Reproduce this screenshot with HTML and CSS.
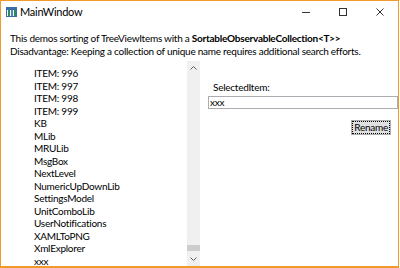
FILE: index.html
```html
<!DOCTYPE html>
<html lang="en">
<head>
    <meta charset="UTF-8">
    <title>MainWindow</title>
    <link rel="stylesheet" href="styles.css">
</head>
<body>
    <div class="window">
        <div class="titlebar">
            <svg class="app-icon" width="11" height="10" viewBox="0 0 11 10">
                <rect x="0.5" y="0.5" width="10" height="9" fill="#fff" stroke="#3a6ea5"/>
                <rect x="1" y="1" width="9" height="2" fill="#3a6ea5"/>
                <rect x="2" y="3" width="2" height="6" fill="#2e8b57"/>
                <rect x="5" y="3" width="2" height="6" fill="#4a86c5"/>
                <rect x="8" y="3" width="2" height="6" fill="#2e8b57"/>
            </svg>
            <span class="title">MainWindow</span>
            <div class="caption-buttons">
                <span class="cap">
                    <svg width="8" height="8" viewBox="0 0 8 8"><path d="M0 4.5h8" stroke="#333"/></svg>
                </span>
                <span class="cap">
                    <svg width="8" height="8" viewBox="0 0 8 8"><rect x="0.5" y="0.5" width="7" height="7" fill="none" stroke="#333"/></svg>
                </span>
                <span class="cap">
                    <svg width="8" height="8" viewBox="0 0 8 8"><path d="M0.5 0.5l7 7M7.5 0.5l-7 7" stroke="#333"/></svg>
                </span>
            </div>
        </div>
        <div class="content">
            <p class="intro">This demos sorting of TreeViewItems with a <b>SortableObservableCollection&lt;T&gt;&gt;</b><br>Disadvantage: Keeping a collection of unique name requires additional search efforts.</p>
            <div class="main">
                <div class="tree">
                    <ul class="items">
                        <li>ITEM: 996</li>
                        <li>ITEM: 997</li>
                        <li>ITEM: 998</li>
                        <li>ITEM: 999</li>
                        <li>KB</li>
                        <li>MLib</li>
                        <li>MRULib</li>
                        <li>MsgBox</li>
                        <li>NextLevel</li>
                        <li>NumericUpDownLib</li>
                        <li>SettingsModel</li>
                        <li>UnitComboLib</li>
                        <li>UserNotifications</li>
                        <li>XAMLToPNG</li>
                        <li>XmlExplorer</li>
                        <li class="selected">xxx</li>
                    </ul>
                    <div class="scrollbar">
                        <span class="arrow up">
                            <svg width="7" height="4" viewBox="0 0 7 4"><path d="M0.5 3.5l3-3 3 3" fill="none" stroke="#606060"/></svg>
                        </span>
                        <span class="track"><span class="thumb"></span></span>
                        <span class="arrow down">
                            <svg width="7" height="4" viewBox="0 0 7 4"><path d="M0.5 0.5l3 3 3-3" fill="none" stroke="#606060"/></svg>
                        </span>
                    </div>
                </div>
                <div class="side">
                    <label class="side-label">SelectedItem:</label>
                    <div class="textbox">xxx</div>
                    <div class="actions">
                        <button class="rename">Rename</button>
                    </div>
                </div>
            </div>
        </div>
    </div>
</body>
</html>
```

FILE: styles.css
```css
:root {
    --border-color: #f09a2c;
    --text-color: #000;
    --scroll-bg: #f0f0f0;
    --thumb-color: #cdcdcd;
}

* {
    box-sizing: border-box;
}

body {
    margin: 0;
    font-family: Lato, "Noto Sans", sans-serif;
    font-size: 10px;
    letter-spacing: -0.25px;
    color: var(--text-color);
    background: #fff;
}

.window {
    width: 399px;
    height: 268px;
    border: 1px solid var(--border-color);
    border-bottom-width: 2px;
    display: flex;
    flex-direction: column;
    overflow: hidden;
}

.titlebar {
    height: 21px;
    display: flex;
    align-items: center;
    padding-left: 5px;
}

.app-icon {
    margin-right: 3px;
}

.title {
    font-size: 11px;
    flex: 1;
    margin-top: -1px;
}

.caption-buttons {
    display: flex;
    align-self: stretch;
}

.cap {
    width: 37px;
    display: flex;
    align-items: center;
    justify-content: center;
}

.content {
    flex: 1;
    display: flex;
    flex-direction: column;
    min-height: 0;
}

.intro {
    margin: 10px 0 0 9px;
    line-height: 12.5px;
}

.intro b {
    font-weight: 700;
}

.main {
    flex: 1;
    display: flex;
    margin-top: 4px;
    min-height: 0;
}

.tree {
    width: 199px;
    display: flex;
}

.items {
    list-style: none;
    margin: 0;
    padding: 6px 0 0 33px;
    flex: 1;
    overflow: hidden;
}

.items li {
    height: 12.5px;
    line-height: 12.5px;
    white-space: nowrap;
}

.scrollbar {
    width: 13px;
    background: var(--scroll-bg);
    display: flex;
    flex-direction: column;
}

.arrow {
    height: 14px;
    display: flex;
    align-items: center;
    justify-content: center;
}

.track {
    flex: 1;
    display: flex;
    flex-direction: column;
    justify-content: flex-end;
    padding-bottom: 1px;
}

.thumb {
    height: 6px;
    background: var(--thumb-color);
}

.side {
    flex: 1;
    padding: 19px 0 0 8px;
    display: flex;
    flex-direction: column;
}

.side-label {
    padding-left: 5px;
    line-height: 14px;
}

.textbox {
    margin-top: 2px;
    height: 13px;
    border: 1px solid #abadb3;
    width: 190px;
    line-height: 11px;
    padding-left: 1px;
}

.actions {
    display: flex;
    justify-content: flex-end;
    padding-right: 8px;
    margin-top: 12px;
}

.rename {
    font-family: inherit;
    font-size: 10px;
    letter-spacing: inherit;
    height: 13px;
    line-height: 9px;
    padding: 0 1px;
    background: #e1e1e1;
    border: 1px dotted #000;
    outline: 1px solid #adadad;
    color: #000;
}
```
